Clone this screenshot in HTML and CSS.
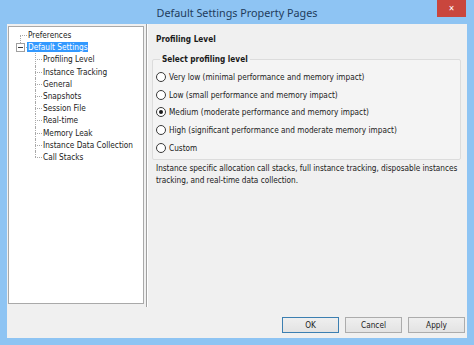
FILE: index.html
```html
<html>

<head>
    <title>Default Settings Property Pages</title>
    <link rel="stylesheet" href="styles.css">
</head>

<body>
    <div class="window">
        <div class="titlebar">
            <div></div>
            <div class="title">Default Settings Property Pages</div>
            <div class="closebtn">&#x2715;</div>
        </div>
        <div class="client">
            <div class="main">
                <div class="tree">
                    <ul class="toplevel">
                        <li><span class="label">Preferences</span></li>
                        <li class="open">
                            <span class="toggle"></span>
                            <span class="label selected">Default Settings</span>
                            <ul class="children">
                                <li><span class="label">Profiling Level</span></li>
                                <li><span class="label">Instance Tracking</span></li>
                                <li><span class="label">General</span></li>
                                <li><span class="label">Snapshots</span></li>
                                <li><span class="label">Session File</span></li>
                                <li><span class="label">Real-time</span></li>
                                <li><span class="label">Memory Leak</span></li>
                                <li><span class="label">Instance Data Collection</span></li>
                                <li><span class="label">Call Stacks</span></li>
                            </ul>
                        </li>
                    </ul>
                </div>
                <div class="panel">
                    <div class="heading">Profiling Level</div>
                    <fieldset class="group">
                        <legend>Select profiling level</legend>
                        <label class="radio"><span class="circle"></span>Very low (minimal performance and memory impact)</label>
                        <label class="radio"><span class="circle"></span>Low (small performance and memory impact)</label>
                        <label class="radio"><span class="circle checked"></span>Medium (moderate performance and memory impact)</label>
                        <label class="radio"><span class="circle"></span>High (significant performance and moderate memory impact)</label>
                        <label class="radio"><span class="circle"></span>Custom</label>
                    </fieldset>
                    <p class="description">Instance specific allocation call stacks, full instance tracking, disposable instances tracking, and real-time data collection.</p>
                </div>
            </div>
            <div class="buttons">
                <button class="btn default">OK</button>
                <button class="btn">Cancel</button>
                <button class="btn">Apply</button>
            </div>
        </div>
    </div>
</body>

</html>
```

FILE: styles.css
```css
body {
    margin: 0;
    background-color: #8ec4f3;
}

.window {
    width: 474px;
    height: 345px;
    display: flex;
    flex-direction: column;
    background-color: #8ec4f3;
    font-family: "DejaVu Sans Condensed", "Liberation Sans", sans-serif;
    font-stretch: condensed;
    font-size: 8.2px;
    color: #1a1a1a;
}

.titlebar {
    height: 24px;
    display: grid;
    grid-template-columns: 1fr auto 1fr;
}

.title {
    font-family: "Noto Sans", sans-serif;
    font-stretch: normal;
    font-size: 10.8px;
    color: #1f3c5c;
    line-height: 25px;
}

.closebtn {
    justify-self: end;
    width: 29px;
    height: 17px;
    margin-right: 8px;
    background-color: #c9463d;
    color: #fff;
    font-family: "DejaVu Sans", sans-serif;
    font-size: 8px;
    font-weight: bold;
    text-align: center;
    line-height: 17px;
}

.client {
    flex: 1;
    margin: 0 7px 7px 7px;
    background-color: #f0f0f0;
    display: flex;
    flex-direction: column;
}

.main {
    height: 283px;
    display: flex;
}

.tree {
    width: 134px;
    margin: 2px 0 3px 1px;
    background-color: #fff;
    border: 1px solid #a9a9a9;
    padding-top: 1px;
    line-height: 12.2px;
    white-space: nowrap;
}

.tree ul {
    list-style: none;
    margin: 0;
    padding: 0;
}

.tree li {
    position: relative;
    padding-left: 7px;
}

.tree li::before {
    content: "";
    position: absolute;
    left: 0;
    top: 6px;
    width: 7px;
    border-top: 1px dotted #a8a8a8;
}

.toplevel {
    margin-left: 11px !important;
    padding-top: 1px !important;
}

.toplevel > li:first-child::after {
    content: "";
    position: absolute;
    left: 0;
    top: 6px;
    height: 12px;
    border-left: 1px dotted #a8a8a8;
}

.children {
    margin-left: 8px !important;
}

.children li::after {
    content: "";
    position: absolute;
    left: 0;
    top: 0;
    height: 100%;
    border-left: 1px dotted #a8a8a8;
}

.children li:last-child::after {
    height: 6px;
}

.label {
    padding: 0 1px;
}

.selected {
    background-color: #3399ff;
    color: #fff;
}

.toggle {
    position: absolute;
    left: -4px;
    top: 2px;
    width: 7px;
    height: 7px;
    border: 1px solid #a0a0a0;
    background-color: #fff;
    z-index: 1;
}

.toggle::after {
    content: "";
    position: absolute;
    left: 1px;
    top: 3px;
    width: 5px;
    border-top: 1px solid #3a3a3a;
}

.panel {
    flex: 1;
    margin-left: 2px;
    border-left: 1px solid #a0a0a0;
    box-shadow: inset 1px 0 #ffffff;
    padding: 9px 5px 0 9px;
}

.heading {
    font-weight: bold;
    line-height: 12px;
}

.group {
    margin: 9px 1px 0 -4px;
    padding: 4px 0 3px 3px;
    border: 1px solid #dcdcdc;
    border-radius: 2px;
    background-color: #f4f4f4;
}

.group legend {
    font-weight: bold;
    padding: 0 2px;
    margin-left: 4px;
}

.radio {
    display: flex;
    align-items: center;
    height: 17.7px;
}

.circle {
    width: 8px;
    height: 8px;
    border: 1px solid #3a3a3a;
    border-radius: 50%;
    background-color: #fff;
    margin-right: 3px;
    display: flex;
    align-items: center;
    justify-content: center;
}

.circle.checked::after {
    content: "";
    width: 4px;
    height: 4px;
    border-radius: 50%;
    background-color: #1a1a1a;
}

.description {
    margin: 2px 0 0 0;
    line-height: 12px;
    letter-spacing: -0.03px;
}

.buttons {
    flex: 1;
    display: flex;
    justify-content: flex-end;
    align-items: flex-start;
    gap: 6px;
    padding: 10px 2px 0 0;
}

.btn {
    width: 57px;
    height: 16px;
    padding: 0;
    font-family: inherit;
    font-stretch: condensed;
    font-size: 8.2px;
    color: #1a1a1a;
    background: linear-gradient(#efefef, #e3e3e3);
    border: 1px solid #acacac;
}

.btn.default {
    border-color: #3c7fb1;
}
```
